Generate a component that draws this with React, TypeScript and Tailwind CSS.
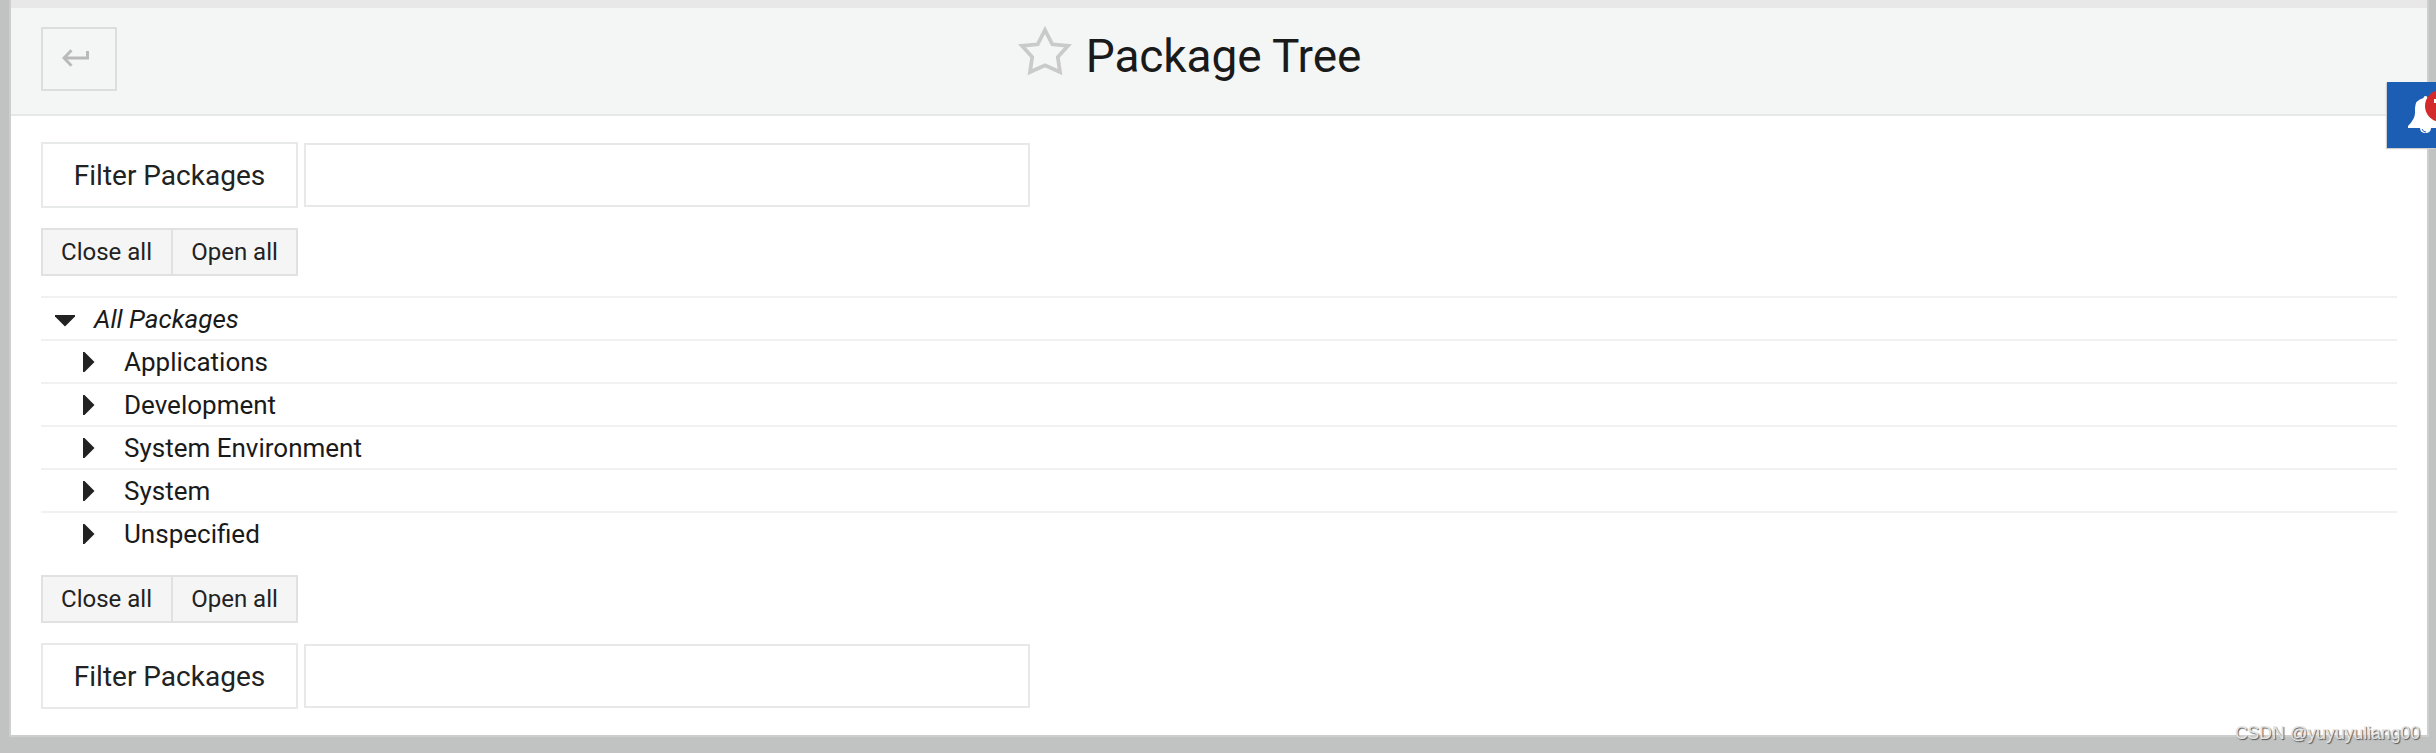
import { ReactNode } from "react";

interface TreeNode {
  name: string;
  root?: boolean;
}

const nodes: TreeNode[] = [
  { name: "All Packages", root: true },
  { name: "Applications" },
  { name: "Development" },
  { name: "System Environment" },
  { name: "System" },
  { name: "Unspecified" }
];

function BackIcon() {
  return (
    <svg width="28" height="18" viewBox="0 0 28 18" fill="none" stroke="#bababa" strokeWidth="3">
      <path d="M25.5 2v7H3M9.5 1.2L2 9l7.5 7.8" />
    </svg>
  );
}

function StarIcon() {
  return (
    <svg width="54" height="52" viewBox="0 0 54 52" fill="none" stroke="#cacaca" strokeWidth="3.8">
      <path d="M27 4L34.3 18.300L50 19.800L39.800 31L42 46L27 39.300L12 46L14.200 31L4 19.800L19.700 18.300Z" />
    </svg>
  );
}

function Caret({ open }: { open?: boolean }) {
  return open ? (
    <svg width="20" height="12" viewBox="0 0 20 12" fill="#222">
      <path d="M0 0h20v1.500L10 11.500L0 1.500z" />
    </svg>
  ) : (
    <svg width="12" height="20" viewBox="0 0 12 20" fill="#222">
      <path d="M0 0h1.500L11.500 10L1.500 20H0z" />
    </svg>
  );
}

function FilterRow() {
  return (
    <div className="flex items-center gap-1.5">
      <button className="w-[257px] h-[66px] border-2 border-[#e8e9e9] bg-white pt-0.5 text-[28px] whitespace-nowrap text-[#222]">
        Filter Packages
      </button>
      <input type="text" className="w-[726px] h-16 border-2 border-[#e8e8e8] bg-white px-4 text-[28px] outline-none" />
    </div>
  );
}

function TreeButton({ children, className }: { children: ReactNode; className: string }) {
  return (
    <button className={`h-full bg-[#f5f5f5] text-[24px] whitespace-nowrap text-[#222] ${className}`}>{children}</button>
  );
}

function TreeButtons() {
  return (
    <div className="flex w-[257px] h-12 border-2 border-[#e1e1e1]">
      <TreeButton className="w-[130px] border-r-2 border-[#e1e1e1] pr-px">Close all</TreeButton>
      <TreeButton className="flex-1">Open all</TreeButton>
    </div>
  );
}

export default function App() {
  return (
    <div className="relative h-[753px] overflow-hidden bg-[#c1c3c2] pl-[9px] pr-[7px] font-['Roboto',sans-serif] text-[#1a1a1a]">
      <div className="h-[737px] border-x-2 border-b-2 border-[#cdcfce] bg-white">
        <div className="h-2 bg-[#e8e8e8]" />

        {/* Header */}
        <header className="relative flex h-[108px] items-start justify-center border-b-2 border-[#e6e7e7] bg-[#f4f6f5] pr-[59px]">
          <button
            aria-label="Back"
            className="absolute left-[30px] top-[19px] flex h-16 w-[76px] items-center justify-center border-2 border-[#dcdddc] pr-1.5 pb-0.5"
          >
            <BackIcon />
          </button>
          <div className="flex gap-3.5 pt-[18px]">
            <StarIcon />
            <h1 className="text-[46px] leading-[60px] tracking-[-0.1px]">Package Tree</h1>
          </div>
        </header>

        <main className="px-[30px] pt-[26px]">
          <FilterRow />
          <div className="py-5">
            <TreeButtons />
          </div>

          {/* Tree */}
          <ul>
            {nodes.map((node) => (
              <li key={node.name} className="flex h-[43px] items-center border-t-2 border-[#f1f1f1] text-[26px]">
                <span className={node.root ? "w-[53px] pl-3.5 pt-1" : "w-[83px] pl-[42px]"}>
                  <Caret open={node.root} />
                </span>
                <span className={node.root ? "pt-0.5 italic" : "pt-0.5"}>{node.name}</span>
              </li>
            ))}
          </ul>

          <div className="pt-[21px] pb-5">
            <TreeButtons />
          </div>
          <FilterRow />
        </main>
      </div>

      {/* Notifications tab */}
      <div className="absolute right-0 top-[82px] h-[66px] w-[49px] overflow-hidden bg-[#1c5eb3] shadow-[-1px_1px_1px_#cfcfcf]">
        <svg width="49" height="66" viewBox="0 0 49 66">
          <path
            fill="#fff"
            d="M36.500 16q0-2 2-2t2 2q8.500 1 8.500 10v5q0 6 7 13v2H44q0 5-5.500 5t-5.500-5H21v-2q7-7 7-13v-5q0-8 8.500-10z"
          />
          <path d="M35 47q1 3 4 3" fill="none" stroke="#1c5eb3" strokeWidth="1" />
          <circle cx="54" cy="24" r="16" fill="#d32b2b" />
          <rect x="47" y="17" width="3" height="4" fill="#fff" />
        </svg>
      </div>

      <span className="absolute right-4 bottom-[7px] font-['Liberation_Sans',sans-serif] text-[17.6px] text-[#e4e4e4] [text-shadow:1px_1px_1px_#555]">
        CSDN @yuyuyuliang00
      </span>
    </div>
  );
}
